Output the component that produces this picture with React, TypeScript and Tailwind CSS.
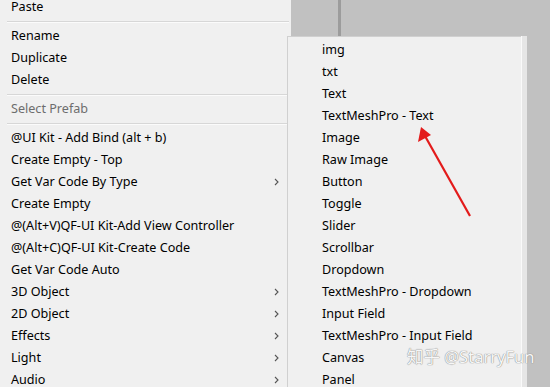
import React from "react";

type Item = { label: string; arrow?: boolean; disabled?: boolean; first?: boolean } | "sep";

const leftItems: Item[] = [
  { label: "Paste", first: true },
  "sep",
  { label: "Rename" },
  { label: "Duplicate" },
  { label: "Delete" },
  "sep",
  { label: "Select Prefab", disabled: true },
  "sep",
  { label: "@UI Kit - Add Bind (alt + b)" },
  { label: "Create Empty - Top" },
  { label: "Get Var Code By Type", arrow: true },
  { label: "Create Empty" },
  { label: "@(Alt+V)QF-UI Kit-Add View Controller" },
  { label: "@(Alt+C)QF-UI Kit-Create Code" },
  { label: "Get Var Code Auto" },
  { label: "3D Object", arrow: true },
  { label: "2D Object", arrow: true },
  { label: "Effects", arrow: true },
  { label: "Light", arrow: true },
  { label: "Audio", arrow: true },
];

const subItems = [
  "img",
  "txt",
  "Text",
  "TextMeshPro - Text",
  "Image",
  "Raw Image",
  "Button",
  "Toggle",
  "Slider",
  "Scrollbar",
  "Dropdown",
  "TextMeshPro - Dropdown",
  "Input Field",
  "TextMeshPro - Input Field",
  "Canvas",
  "Panel",
];

function Chevron() {
  return (
    <svg width="5" height="8" viewBox="0 0 5 8" className="shrink-0">
      <polyline points="1,1 4,4 1,7" fill="none" stroke="#555" strokeWidth="1.1" />
    </svg>
  );
}

function Sep() {
  return (
    <div className="h-[7px] shrink-0 flex flex-col pt-[3px] pl-[7px] pr-[2px]">
      <div className="h-px shrink-0 bg-[#d7d7d7]" />
      <div className="h-px shrink-0 bg-[#fbfbfb]" />
    </div>
  );
}

export default function App() {
  return (
    <div
      className="w-[550px] h-[387px] overflow-hidden relative bg-[#c1c1c1] flex text-[12.6px] text-black"
      style={{ fontFamily: '"Noto Sans", "Noto Sans CJK SC", sans-serif' }}
    >
      {/* main context menu */}
      <div className="w-[291px] shrink-0 bg-[#f0f0f0] flex flex-col">
        {leftItems.map((it, i) =>
          it === "sep" ? (
            <Sep key={i} />
          ) : it.first ? (
            <div key={i} className="h-[18px] shrink-0 flex items-start pl-[11px] pr-[12px]">
              <span className="flex-1 whitespace-nowrap leading-[14px]">{it.label}</span>
            </div>
          ) : (
            <div
              key={i}
              className={`h-[22px] shrink-0 flex items-center pl-[11px] pr-[12px] ${
                it.disabled ? "text-[#6d6d6d]" : "text-black"
              }`}
            >
              <span className="flex-1 whitespace-nowrap">{it.label}</span>
              {it.arrow && <Chevron />}
            </div>
          )
        )}
      </div>

      {/* right area */}
      <div className="flex-1 flex flex-col">
        <div className="h-[36px] shrink-0 flex">
          <div className="w-[47px]" />
          <div className="w-[3px] bg-[#9c9c9c]" />
        </div>
        <div className="ml-[-4px] w-[240px] shrink-0 flex">
          <div className="w-[234px] bg-[#f0f0f0] border-l border-t border-[#d0d0d0] pt-[2px] flex flex-col">
            {subItems.map((s) => (
              <div key={s} className="h-[22px] shrink-0 flex items-center pl-[34px] whitespace-nowrap">
                {s}
              </div>
            ))}
          </div>
          <div className="w-px bg-[#fafafa]" />
          <div className="w-[5px] bg-[#e6e6e6]" />
        </div>
      </div>

      {/* annotation arrow */}
      <svg className="absolute left-0 top-0 pointer-events-none" width="550" height="387">
        <line x1="470" y1="216" x2="425" y2="136" stroke="#e31b1b" strokeWidth="2.2" />
        <polygon points="421,127 418,142 431,135" fill="#e31b1b" />
      </svg>

      {/* watermark */}
      <div
        className="absolute left-[407px] top-[349px] text-[16.5px] leading-none text-[#f7f7f7] whitespace-nowrap pointer-events-none"
        style={{ textShadow: "0 0 1px #8a8a8a, 0 0 1px #8a8a8a" }}
      >
        知乎 @StarryFun
      </div>
    </div>
  );
}
